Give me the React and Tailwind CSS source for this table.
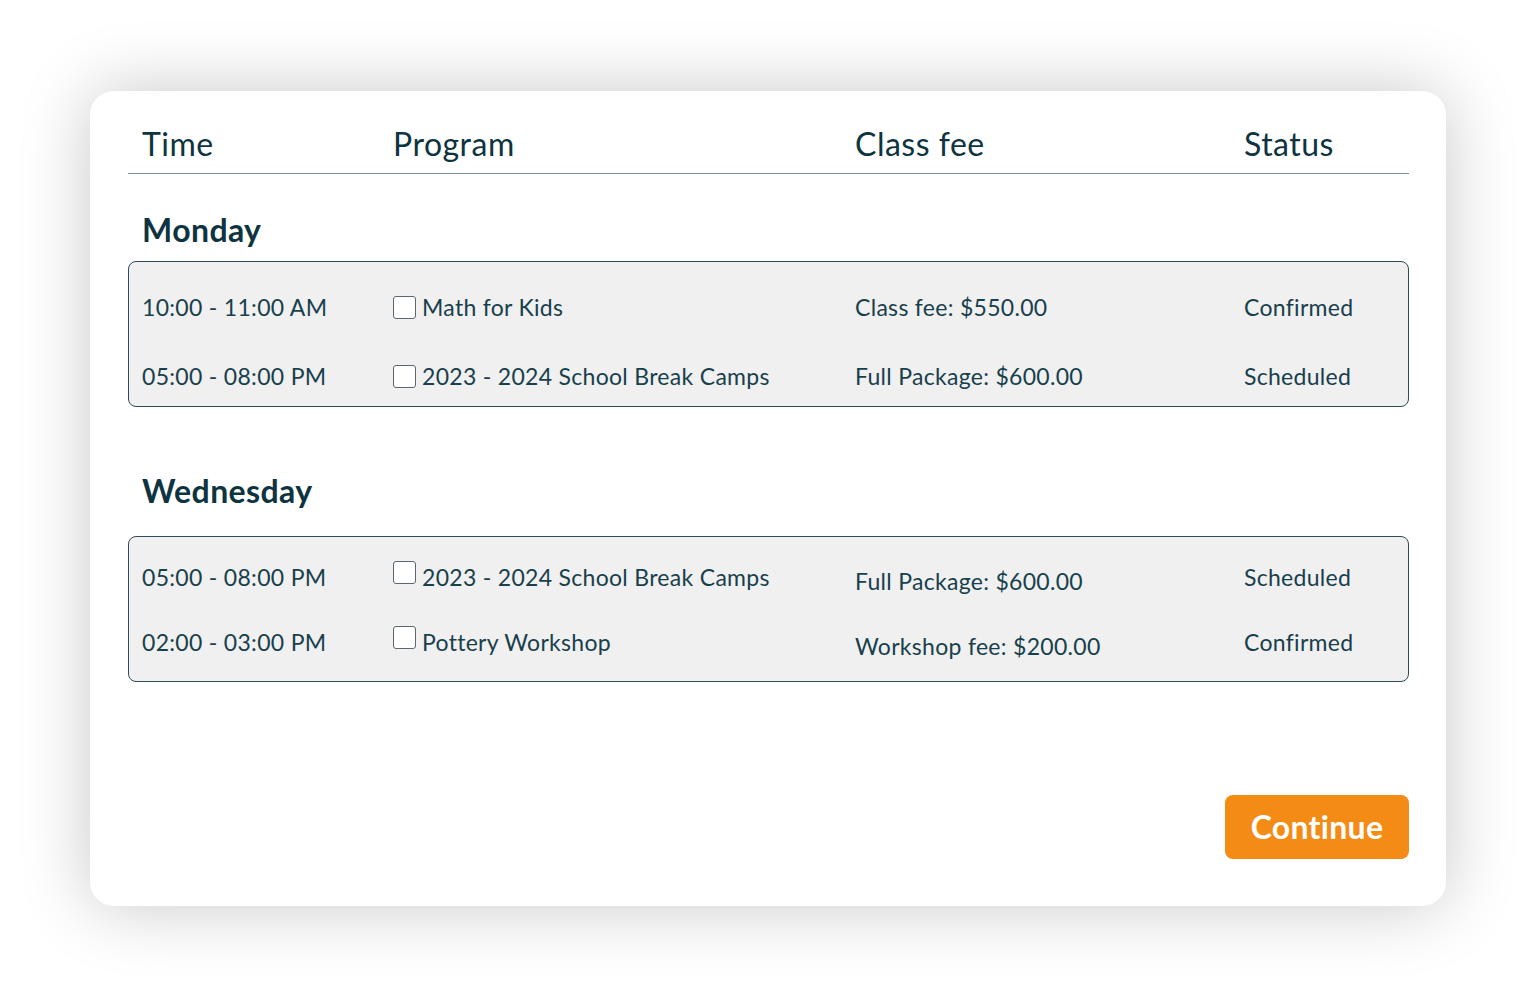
import React from "react";

const font = { fontFamily: "Lato, 'Open Sans', sans-serif" };

function Checkbox({ shift }) {
  return (
    <span
      className={
        "inline-block w-[23px] h-[23px] rounded-[3px] border border-[#5b6770] bg-white mr-[6px] shrink-0 " +
        (shift ? "-translate-y-[5px]" : "")
      }
    />
  );
}

function Row({ time, program, fee, status, shiftCheck, shiftFee }) {
  return (
    <div className="grid grid-cols-[251px_462px_389px_1fr] h-[34px] items-center pl-[13px] text-[23px] tracking-[0.3px] text-[#183f4c]">
      <div>{time}</div>
      <div className="flex items-center">
        <Checkbox shift={shiftCheck} />
        <span>{program}</span>
      </div>
      <div className={shiftFee ? "translate-y-[4px]" : ""}>{fee}</div>
      <div>{status}</div>
    </div>
  );
}

export default function App() {
  return (
    <div className="w-full h-[996px] bg-white pt-[91px] pl-[90px]" style={font}>
      <div className="w-[1356px] h-[815px] rounded-[24px] bg-white shadow-[0_0_70px_rgba(0,0,0,0.22)] pl-[38px] pr-[37px] flex flex-col">
        <div className="h-[83px] border-b border-[#7e929b] grid grid-cols-[251px_462px_389px_1fr] items-end pb-[11px] pl-[14px] text-[32px] tracking-[0.5px] leading-[36px] text-[#0e3441]">
          <div>Time</div>
          <div>Program</div>
          <div>Class fee</div>
          <div>Status</div>
        </div>

        <div className="pt-[38px] pb-[13px] pl-[14px] text-[32px] tracking-[0.4px] leading-[36px] font-bold text-[#0e3441]">
          Monday
        </div>
        <div className="h-[146px] rounded-[8px] border border-[#2f4b57] bg-[#f0f0f0] pt-[28px] flex flex-col gap-[35px]">
          <Row time="10:00 - 11:00 AM" program="Math for Kids" fee="Class fee: $550.00" status="Confirmed" />
          <Row time="05:00 - 08:00 PM" program="2023 - 2024 School Break Camps" fee="Full Package: $600.00" status="Scheduled" />
        </div>

        <div className="pt-[66px] pb-[27px] pl-[14px] text-[32px] tracking-[0.4px] leading-[36px] font-bold text-[#0e3441]">
          Wednesday
        </div>
        <div className="h-[146px] rounded-[8px] border border-[#2f4b57] bg-[#f0f0f0] pt-[23px] flex flex-col gap-[31px]">
          <Row time="05:00 - 08:00 PM" program="2023 - 2024 School Break Camps" fee="Full Package: $600.00" status="Scheduled" shiftCheck shiftFee />
          <Row time="02:00 - 03:00 PM" program="Pottery Workshop" fee="Workshop fee: $200.00" status="Confirmed" shiftCheck shiftFee />
        </div>

        <div className="flex justify-end pt-[113px]">
          <button className="w-[184px] h-[64px] rounded-[8px] bg-[#f48b14] text-white text-[32px] tracking-[0.3px] font-bold">
            Continue
          </button>
        </div>
      </div>
    </div>
  );
}
